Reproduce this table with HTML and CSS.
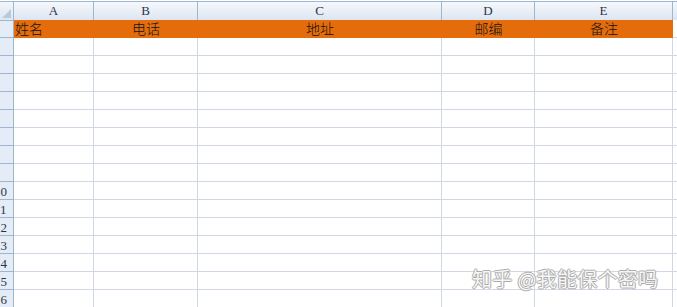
FILE: index.html
```html
<!DOCTYPE html>
<html lang="zh">
<head>
<meta charset="utf-8">
<title>Sheet</title>
<link rel="stylesheet" href="styles.css">
</head>
<body>
<div class="sheet">
  <div class="row head">
    <div class="corner"><span class="tri"></span></div>
    <div class="colh">A</div>
    <div class="colh">B</div>
    <div class="colh">C</div>
    <div class="colh">D</div>
    <div class="colh">E</div>
    <div class="colh last"></div>
  </div>
  <div class="row title">
    <div class="rh"></div>
    <div class="tc left">姓名</div>
    <div class="tc">电话</div>
    <div class="tc">地址</div>
    <div class="tc">邮编</div>
    <div class="tc">备注</div>
    <div class="tc end"></div>
  </div>
  <div class="row"><div class="rh"></div><div class="c"></div><div class="c"></div><div class="c"></div><div class="c"></div><div class="c"></div><div class="c end"></div></div>
  <div class="row"><div class="rh"></div><div class="c"></div><div class="c"></div><div class="c"></div><div class="c"></div><div class="c"></div><div class="c end"></div></div>
  <div class="row"><div class="rh"></div><div class="c"></div><div class="c"></div><div class="c"></div><div class="c"></div><div class="c"></div><div class="c end"></div></div>
  <div class="row"><div class="rh"></div><div class="c"></div><div class="c"></div><div class="c"></div><div class="c"></div><div class="c"></div><div class="c end"></div></div>
  <div class="row"><div class="rh"></div><div class="c"></div><div class="c"></div><div class="c"></div><div class="c"></div><div class="c"></div><div class="c end"></div></div>
  <div class="row"><div class="rh"></div><div class="c"></div><div class="c"></div><div class="c"></div><div class="c"></div><div class="c"></div><div class="c end"></div></div>
  <div class="row"><div class="rh"></div><div class="c"></div><div class="c"></div><div class="c"></div><div class="c"></div><div class="c"></div><div class="c end"></div></div>
  <div class="row"><div class="rh"></div><div class="c"></div><div class="c"></div><div class="c"></div><div class="c"></div><div class="c"></div><div class="c end"></div></div>
  <div class="row"><div class="rh"><span class="num">10</span></div><div class="c"></div><div class="c"></div><div class="c"></div><div class="c"></div><div class="c"></div><div class="c end"></div></div>
  <div class="row"><div class="rh"><span class="num">11</span></div><div class="c"></div><div class="c"></div><div class="c"></div><div class="c"></div><div class="c"></div><div class="c end"></div></div>
  <div class="row"><div class="rh"><span class="num">12</span></div><div class="c"></div><div class="c"></div><div class="c"></div><div class="c"></div><div class="c"></div><div class="c end"></div></div>
  <div class="row"><div class="rh"><span class="num">13</span></div><div class="c"></div><div class="c"></div><div class="c"></div><div class="c"></div><div class="c"></div><div class="c end"></div></div>
  <div class="row"><div class="rh"><span class="num">14</span></div><div class="c"></div><div class="c"></div><div class="c"></div><div class="c"></div><div class="c"></div><div class="c end"></div></div>
  <div class="row"><div class="rh"><span class="num">15</span></div><div class="c"></div><div class="c"></div><div class="c"></div><div class="c"></div><div class="c"></div><div class="c end"></div></div>
  <div class="row"><div class="rh"><span class="num">16</span></div><div class="c"></div><div class="c"></div><div class="c"></div><div class="c"></div><div class="c"></div><div class="c end"></div></div>
  <div class="watermark">知乎 @我能保个密吗</div>
</div>
</body>
</html>
```
FILE: styles.css
```css
* { box-sizing: border-box; }
html, body { margin: 0; padding: 0; background: #fff; }
body { width: 677px; height: 307px; overflow: hidden; }

.sheet {
  position: relative;
  padding-top: 1px;
  font-family: "Liberation Serif", "DejaVu Serif", serif;
}

.row {
  display: grid;
  grid-template-columns: 14px 80px 104px 244px 93px 138px 1fr;
  height: 18px;
}

.row.head {
  height: 19px;
  border-top: 1px solid #9eb6ce;
}

.corner {
  position: relative;
  background: linear-gradient(#f3f6fb, #dde6f2);
  border-right: 1px solid #9eb6ce;
  border-bottom: 1px solid #9eb6ce;
}
.tri {
  position: absolute;
  right: 2px;
  bottom: 2px;
  width: 0;
  height: 0;
  border-left: 9px solid transparent;
  border-bottom: 9px solid #b9c9dc;
}

.colh {
  background: linear-gradient(#f5f8fc 0%, #e9eff7 50%, #dce5f1 100%);
  border-right: 1px solid #9eb6ce;
  border-bottom: 1px solid #9eb6ce;
  color: #2a3548;
  font-size: 13px;
  line-height: 18px;
  text-align: center;
}
.colh.last { border-right: none; }

.rh {
  background: #e4ecf7;
  border-right: 1px solid #9eb6ce;
  border-bottom: 1px solid #9eb6ce;
  overflow: hidden;
  font-size: 13px;
  line-height: 19px;
  color: #2a3548;
  white-space: nowrap;
}
.num { display: inline-block; margin-left: -6px; }

.c {
  border-right: 1px solid #d0d7e5;
  border-bottom: 1px solid #d0d7e5;
}
.c.end { border-right: none; }

.title .tc {
  background: #e46c0a;
  font-family: "Noto Sans CJK SC", sans-serif;
  font-weight: 300;
  font-size: 14px;
  line-height: 17px;
  color: #111;
  text-align: center;
  border-bottom: 1px solid #e46c0a;
}
.title .tc.left { text-align: left; padding-left: 1px; }
.title .tc.end { background: #fff; border-bottom: 1px solid #d0d7e5; }

.watermark {
  position: absolute;
  left: 472px;
  top: 267px;
  font-family: "Noto Sans CJK SC", sans-serif;
  font-size: 20px;
  line-height: 24px;
  letter-spacing: 0.3px;
  color: #f6f6f6;
  text-shadow: 1px 0 0 #ababab, -1px 0 0 #ababab, 0 1px 0 #ababab, 0 -1px 0 #ababab;
  white-space: nowrap;
}
```
